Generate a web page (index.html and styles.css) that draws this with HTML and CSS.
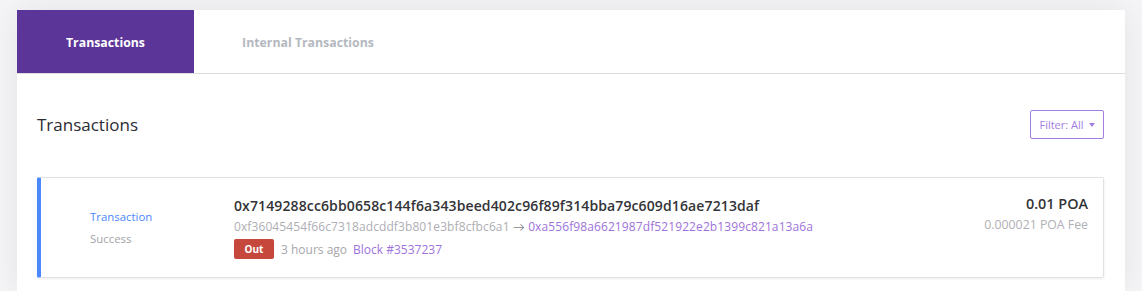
FILE: index.html
```html
<!DOCTYPE html>
<html>
<head>
<meta charset="utf-8">
<link rel="stylesheet" href="styles.css">
</head>
<body>
<div class="card">
  <div class="tabs">
    <div class="tab active">Transactions</div>
    <div class="tab">Internal Transactions</div>
  </div>
  <div class="card-body">
    <div class="head">
      <h2 class="title">Transactions</h2>
      <button class="filter">Filter: All <span class="caret"></span></button>
    </div>
    <div class="tile">
      <div class="col-type">
        <div class="type">Transaction</div>
        <div class="status">Success</div>
      </div>
      <div class="col-main">
        <div class="hash">0x7149288cc6bb0658c144f6a343beed402c96f89f314bba79c609d16ae7213daf</div>
        <div class="addrs"><span class="from">0xf36045454f66c7318adcddf3b801e3bf8cfbc6a1</span> <span class="arrow">&rarr;</span> <span class="to">0xa556f98a6621987df521922e2b1399c821a13a6a</span></div>
        <div class="meta"><span class="badge">Out</span><span class="ago">3 hours ago</span><span class="block">Block #3537237</span></div>
      </div>
      <div class="col-value">
        <div class="value">0.01 POA</div>
        <div class="fee">0.000021 POA Fee</div>
      </div>
    </div>
  </div>
</div>
</body>
</html>
```

FILE: styles.css
```css
* { box-sizing: border-box; }
html, body { margin: 0; padding: 0; }
body {
  background: #f5f5f8;
  font-family: "Open Sans", "Lato", sans-serif;
  padding: 10px 17px 0 17px;
  height: 291px;
  overflow: hidden;
}
.card {
  background: #fff;
  width: 1108px;
  box-shadow: 0 0 30px rgba(0, 0, 0, 0.08);
  height: 281px;
}
.tabs {
  display: flex;
  height: 64px;
  border-bottom: 1px solid #dcdcdc;
}
.tab {
  display: flex;
  align-items: center;
  justify-content: center;
  font-size: 12.3px;
  font-weight: 700;
  color: #b4b8c0;
  width: 228px;
  padding-top: 2px;
}
.tab.active {
  background: #5c3599;
  color: #fff;
  width: 177px;
}
.card-body {
  padding: 36px 21px 0 20px;
}
.head {
  display: flex;
  justify-content: space-between;
  align-items: center;
  height: 29px;
}
.title {
  margin: 0;
  font-size: 17px;
  font-weight: 400;
  color: #2b2b33;
}
.filter {
  height: 29px;
  width: 74px;
  border: 1px solid #a27ee0;
  border-radius: 2px;
  background: #fff;
  color: #a27ee0;
  font-family: inherit;
  font-size: 11px;
  padding: 0;
  display: flex;
  align-items: center;
  justify-content: center;
  gap: 5px;
}
.caret {
  width: 0; height: 0;
  border-left: 3.5px solid transparent;
  border-right: 3.5px solid transparent;
  border-top: 4px solid #a27ee0;
}
.tile {
  margin-top: 38px;
  height: 101px;
  border: 1px solid #e2e2e6;
  border-left: 4px solid #4b87ff;
  border-radius: 2px;
  box-shadow: 0 1px 3px rgba(0,0,0,0.08);
  display: flex;
  align-items: center;
  padding: 0 15px 0 49px;
}
.col-type {
  width: 144px;
  font-size: 11.4px;
  line-height: 22px;
}
.type { color: #4b87ff; }
.status { color: #a3a3a8; }
.col-main {
  flex: 1;
  margin-top: 0px;
}
.hash {
  font-size: 14px;
  letter-spacing: 0.12px;
  font-weight: 600;
  color: #333338;
  line-height: 20px;
}
.addrs {
  font-size: 12px;
  letter-spacing: 0.1px;
  line-height: 18px;
  margin-top: 2px;
  color: #aeaeb4;
}
.to { color: #9e72db; }
.arrow { color: #888; }
.meta {
  display: flex;
  align-items: center;
  margin-top: 3px;
  font-size: 12px;
}
.badge {
  width: 40px;
  height: 20px;
  background: #c6483c;
  color: #fff;
  font-weight: 700;
  font-size: 10px;
  border-radius: 2px;
  display: flex;
  align-items: center;
  justify-content: center;
  margin-right: 7px;
}
.ago { color: #a6a6ac; margin-right: 6px; }
.block { color: #9e72db; }
.col-value {
  text-align: right;
  align-self: flex-start;
  margin-top: 16px;
}
.value {
  font-size: 14.4px;
  font-weight: 600;
  color: #333338;
  line-height: 20px;
}
.fee {
  font-size: 12.3px;
  color: #b0b0b6;
  margin-top: 2px;
}
```
